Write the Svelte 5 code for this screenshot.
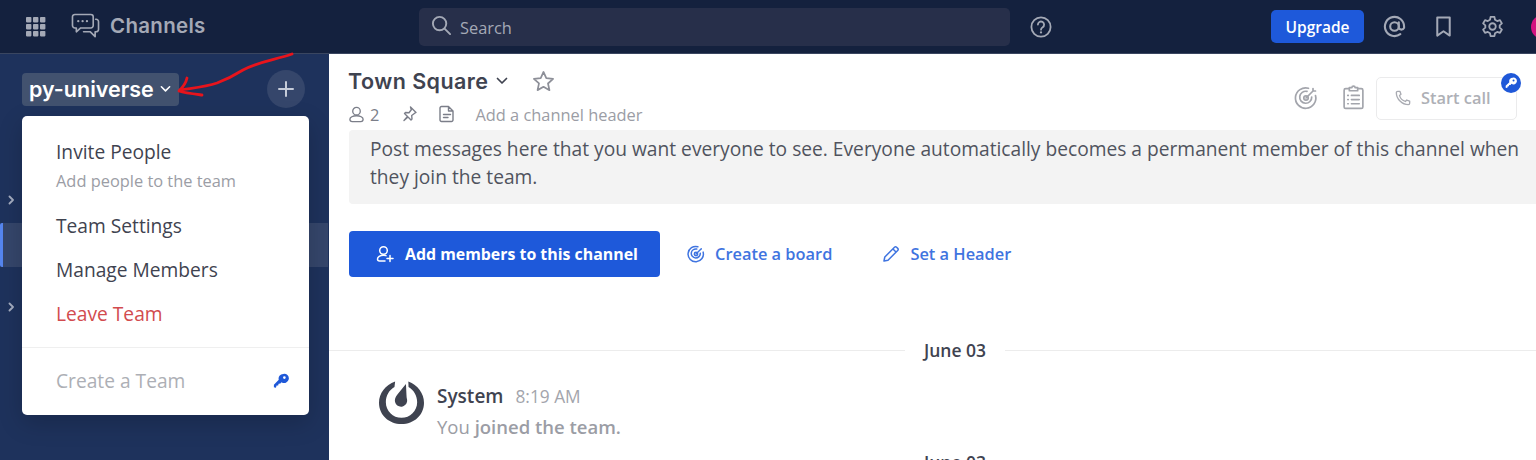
<script>
  const menuItems = [
    { label: 'Team Settings' },
    { label: 'Manage Members' },
    { label: 'Leave Team', danger: true }
  ];
</script>

<div class="app">
  <header class="topbar">
    <div class="product">
      <svg class="grid-icon" viewBox="0 0 20 20" fill="#a4a9b6">
        {#each [0, 7, 14] as y}
          {#each [0, 7, 14] as x}
            <rect x={x} y={y} width="5.4" height="5.4" rx="0.8" />
          {/each}
        {/each}
      </svg>
      <svg class="channels-icon" viewBox="0 0 30 28" fill="none" stroke="#a4a9b6" stroke-width="1.7" stroke-linejoin="round" stroke-linecap="round">
        <path d="M4 1.5h16.5a2.5 2.5 0 0 1 2.5 2.5v9a2.5 2.5 0 0 1-2.5 2.5H10l-4.5 4v-4H4A2.5 2.5 0 0 1 1.500 13V4A2.500 2.500 0 0 1 4 1.500z" />
        <path d="M25.500 6.500h.5a2.500 2.500 0 0 1 2.500 2.500v8a2.500 2.500 0 0 1-2.500 2.500h-1v5l-5-5H13" />
        <path d="M7.500 8.500h.01M12 8.500h.01M16.500 8.500h.01" stroke-width="2.400" />
      </svg>
      <span class="product-name">Channels</span>
    </div>
    <div class="search">
      <svg viewBox="0 0 22 22" fill="none" stroke="#a4a9b6" stroke-width="2" stroke-linecap="round"><circle cx="9" cy="9" r="7" /><path d="M14.200 14.200 20 20" /></svg>
      <span>Search</span>
    </div>
    <svg class="help" viewBox="0 0 22 22" fill="none" stroke="#a4a9b6" stroke-width="1.800" stroke-linecap="round">
      <circle cx="11" cy="11" r="9.600" />
      <path d="M7.900 8.600a3.100 3.100 0 1 1 4.800 2.600c-1.100.7-1.700 1.300-1.700 2.500" />
      <path d="M11 16.300v.1" stroke-width="2.200" />
    </svg>
    <div class="top-right">
      <button class="upgrade">Upgrade</button>
      <svg class="top-icon" viewBox="0 0 24 24" fill="none" stroke="#a4a9b6" stroke-width="2.200" stroke-linecap="round">
        <circle cx="12" cy="12" r="4.500" />
        <path d="M16.500 7.500v6a3 3 0 0 0 5.500 0V12a10 10 0 1 0-4 8" />
      </svg>
      <svg class="top-icon" viewBox="0 0 24 24" fill="none" stroke="#a4a9b6" stroke-width="2.100" stroke-linejoin="round">
        <path d="M5.500 2.500h13v19L12 17l-6.500 4.500z" />
      </svg>
      <svg class="top-icon" viewBox="0 0 24 24" fill="none" stroke="#a4a9b6" stroke-width="1.900" stroke-linejoin="round">
        <circle cx="12" cy="12" r="3.400" />
        <path d="M10 2h4l.6 3 2.300 1.300 2.900-1 2 3.500-2.300 2v2.400l2.300 2-2 3.500-2.900-1-2.300 1.300-.6 3h-4l-.6-3-2.300-1.300-2.900 1-2-3.500 2.300-2v-2.400l-2.300-2 2-3.500 2.900 1L9.400 5z" />
      </svg>
      <span class="avatar"></span>
    </div>
  </header>

  <div class="body">
    <aside class="sidebar">
      <div class="team-row">
        <button class="team-btn">py-universe
          <svg viewBox="0 0 12 8" fill="none" stroke="#fff" stroke-width="1.700" stroke-linecap="round" stroke-linejoin="round"><path d="M1.500 1.500 6 6l4.500-4.500" /></svg>
        </button>
        <button class="add-btn" aria-label="Add">
          <svg viewBox="0 0 16 16" fill="none" stroke="#c5cbd8" stroke-width="2" stroke-linecap="round"><path d="M8 1v14M1 8h14" /></svg>
        </button>
      </div>
      <div class="cat one"><svg viewBox="0 0 6 10" fill="none" stroke="#a4adc0" stroke-width="1.800" stroke-linecap="round" stroke-linejoin="round"><path d="M1.500 1.500 5 5 1.500 8.500" /></svg></div>
      <div class="active-row"></div>
      <div class="cat two"><svg viewBox="0 0 6 10" fill="none" stroke="#a4adc0" stroke-width="1.800" stroke-linecap="round" stroke-linejoin="round"><path d="M1.500 1.500 5 5 1.500 8.500" /></svg></div>

      <div class="menu">
        <div class="item invite">
          <div>Invite People</div>
          <div class="sub">Add people to the team</div>
        </div>
        {#each menuItems as item}
          <div class="item" class:danger={item.danger}>{item.label}</div>
        {/each}
        <hr />
        <div class="item muted">
          <span>Create a Team</span>
          <svg viewBox="0 0 18 18" fill="#1f58d8"><path d="M11.500 1a5.200 5.200 0 0 0-5 6.700L1 13.200V16l2.300.6.700-2.400 1.800-.2.500-1.900 2-.2 1.300-1.600A5.200 5.200 0 1 0 11.500 1zm1.300 2.700a1.500 1.500 0 1 1 0 3 1.500 1.500 0 0 1 0-3z" /></svg>
        </div>
      </div>
    </aside>

    <main class="main">
      <div class="channel-header">
        <div class="channel-info">
          <div class="channel-title">
            <span>Town Square</span>
            <svg class="chev" viewBox="0 0 12 8" fill="none" stroke="#3f4350" stroke-width="1.700" stroke-linecap="round" stroke-linejoin="round"><path d="M1.500 1.500 6 6l4.500-4.500" /></svg>
            <svg class="star" viewBox="0 0 24 24" fill="none" stroke="#8d8f98" stroke-width="1.800" stroke-linejoin="round"><path d="m12 2 2.900 6.500 7.100.8-5.300 4.800 1.500 7L12 17.500 5.800 21l1.500-7L2 9.300l7.100-.8z" /></svg>
          </div>
          <div class="channel-meta">
            <svg class="m-user" viewBox="0 0 18 18" fill="none" stroke="#7b7e89" stroke-width="1.400"><circle cx="9" cy="5.500" r="4" /><path d="M4.500 16.500h9a2.500 2.500 0 0 0 2.500-2.500c0-2-3-3.700-7-3.700S2 12 2 14a2.500 2.500 0 0 0 2.500 2.500z" /></svg>
            <span class="count">2</span>
            <svg class="m-pin" viewBox="0 0 18 18" fill="none" stroke="#7b7e89" stroke-width="1.400" stroke-linejoin="round" stroke-linecap="round"><path d="M10.500 2 16 7.500l-1.300.7-3 2.300.3 3.500-1 1-3-3-4 3.500 3.500-4-3-3 1-1 3.500.3 2.300-3z" /></svg>
            <svg class="m-file" viewBox="0 0 16 18" fill="none" stroke="#7b7e89" stroke-width="1.400" stroke-linejoin="round" stroke-linecap="round"><path d="M2.500 1.500h7l4.500 4.500v9a1.500 1.500 0 0 1-1.500 1.500h-10A1.500 1.500 0 0 1 1 15V3a1.500 1.500 0 0 1 1.500-1.500zM9.500 1.500V6H14M4.500 9.500h7M4.500 12.500h4.500" /></svg>
            <span class="add-header">Add a channel header</span>
          </div>
        </div>
        <div class="header-actions">
          <svg class="h-target" viewBox="0 0 24 24" fill="none" stroke="#a3a5ac" stroke-width="1.700" stroke-linecap="round"><path d="M21.500 9.500A10.200 10.200 0 1 1 14.500 2.300" /><path d="M17.700 11a6 6 0 1 1-4.700-5.600" /><circle cx="12" cy="12" r="2.200" /><path d="m12 12 7-7M19 5V2.500M19 5h2.500" /></svg>
          <svg class="h-list" viewBox="0 0 20 24" fill="none" stroke="#a3a5ac" stroke-width="1.600" stroke-linecap="round" stroke-linejoin="round"><path d="M6 3.500H2.500A1.500 1.500 0 0 0 1 5v16a1.500 1.500 0 0 0 1.500 1.500h15A1.500 1.500 0 0 0 19 21V5a1.500 1.500 0 0 0-1.500-1.500H14" /><path d="M6 2.500h2.500a1.500 1.500 0 0 1 3 0H14v3H6zM4.500 10h.5M8 10h7.500M4.500 14h.5M8 14h7.500M4.500 18h.5M8 18h7.500" /></svg>
          <div class="call">
            <svg viewBox="0 0 18 18" fill="none" stroke="#a9abb2" stroke-width="1.500" stroke-linecap="round" stroke-linejoin="round"><path d="M3 1.500h2.500l1.200 3.300-1.600 1.500a10 10 0 0 0 6.600 6.600l1.500-1.600 3.300 1.200V15a1.500 1.500 0 0 1-1.500 1.500C8 16.500 1.500 10 1.500 3A1.500 1.500 0 0 1 3 1.500z" /></svg>
            <span>Start call</span>
            <span class="key-badge">
              <svg viewBox="0 0 18 18" fill="#fff"><path d="M11.500 1a5.200 5.200 0 0 0-5 6.700L1 13.200V16l2.300.6.700-2.400 1.800-.2.500-1.900 2-.2 1.300-1.600A5.200 5.200 0 1 0 11.500 1zm1.300 2.700a1.500 1.500 0 1 1 0 3 1.500 1.500 0 0 1 0-3z" /></svg>
            </span>
          </div>
        </div>
      </div>

      <div class="notice">Post messages here that you want everyone to see. Everyone automatically becomes a permanent member of this channel when they join the team.</div>

      <div class="actions">
        <button class="primary">
          <svg viewBox="0 0 18 18" fill="none" stroke="#fff" stroke-width="1.500" stroke-linecap="round"><circle cx="7.500" cy="5.500" r="3.800" /><path d="M9 16H3.500A2 2 0 0 1 1.500 14c0-2 2.500-3.800 6-3.800 1 0 1.800.1 2.500.4M14 10.500v6M11 13.500h6" /></svg>
          Add members to this channel
        </button>
        <span class="link board">
          <svg viewBox="0 0 24 24" fill="none" stroke="#3f74e0" stroke-width="2" stroke-linecap="round"><path d="M21.500 9.500A10.200 10.200 0 1 1 14.500 2.300" /><path d="M17.700 11a6 6 0 1 1-4.700-5.600" /><circle cx="12" cy="12" r="2.200" /><path d="m12 12 7-7" /></svg>
          Create a board
        </span>
        <span class="link">
          <svg viewBox="0 0 18 18" fill="none" stroke="#3f74e0" stroke-width="1.500" stroke-linejoin="round"><path d="M2 16l.8-4L12.500 2.300a1.500 1.500 0 0 1 2.100 0l1.100 1.100a1.500 1.500 0 0 1 0 2.100L6 15.200z" /><path d="m11 4 3 3" /></svg>
          Set a Header
        </span>
      </div>

      <div class="date-sep first"><span>June 03</span></div>

      <div class="post">
        <svg class="logo" viewBox="0 0 46 46" fill="#3f4350">
          <path fill-rule="evenodd" d="M16.500 1.500C6.500 5 0 13.600 0 23.200 0 35.800 10.300 45 23 45s23-9.200 23-21.800C46 13.700 39.600 5.200 30 1.500l.2 5.700c5.200 3 8.800 8.800 8.800 15.500 0 8.800-7.200 16-16 16s-16-7.200-16-16c0-6.700 3.500-12.500 8.800-15.500z" />
          <path d="M27.500 4 19 14.500c-2.300 3-3.200 5.500-2.600 8 .9 3.400 4.300 5.500 7.700 4.600 3.400-.9 5.300-4.200 4.500-7.600C28 17 28 10 27.500 4z" />
        </svg>
        <div class="post-body">
          <div class="post-head"><span class="author">System</span><span class="time">8:19 AM</span></div>
          <div class="post-text">You <b>joined the team.</b></div>
        </div>
      </div>

      <div class="date-sep second"><span>June 03</span></div>
    </main>
  </div>

  <svg class="arrow" viewBox="0 0 130 50" fill="none" stroke="#e8141c" stroke-width="2.800" stroke-linecap="round" stroke-linejoin="round">
    <path d="M122 4C105 10 90 11 73 20 65 25 55 30 47 33 35 37 22 38 10 40" />
    <path d="M17 28C16 33 13 37 9 41 15 43 24 44 32 45" />
  </svg>
</div>

<style>
  :global(body) { margin: 0; background: #fff; }
  .app {
    position: relative;
    width: 1536px;
    height: 460px;
    overflow: hidden;
    display: flex;
    flex-direction: column;
    font-family: "Open Sans", sans-serif;
    color: #3f4350;
  }
  button { font-family: inherit; border: 0; cursor: pointer; }

  .topbar {
    height: 54px;
    flex: none;
    background: #14213e;
    border-bottom: 1px solid #3a4660;
    box-sizing: border-box;
    display: flex;
    align-items: center;
    padding-left: 26px;
  }
  .product { display: flex; align-items: center; width: 393px; }
  .grid-icon { width: 20px; height: 20px; }
  .channels-icon { width: 29px; height: 27px; margin-left: 25px; }
  .product-name {
    margin-left: 10px;
    padding-bottom: 3px;
    font-family: Inter, sans-serif;
    font-weight: 600;
    font-size: 20.500px;
    letter-spacing: 0.3px;
    color: #a4a9b6;
  }
  .search {
    width: 591px;
    height: 38px;
    background: #272f4a;
    border-radius: 5px;
    display: flex;
    align-items: center;
    gap: 8px;
    padding-left: 12px;
    box-sizing: border-box;
    color: #a4a9b6;
    font-size: 16.400px;
  }
  .search svg { width: 21px; height: 21px; margin-top: -2px; }
  .search span { padding-top: 1px; }
  .help { width: 22px; height: 22px; margin-left: 20px; }
  .top-right { margin-left: auto; display: flex; align-items: center; }
  .upgrade {
    width: 93px;
    height: 33px;
    background: #1e59da;
    color: #fff;
    font-weight: 600;
    font-size: 15.500px;
    border-radius: 5px;
    padding: 0;
  }
  .top-icon { width: 23px; height: 23px; margin-left: 18px; margin-right: 8px; }
  .top-icon:nth-of-type(1) { margin-left: 19px; }
  .avatar {
    width: 24px;
    height: 24px;
    border-radius: 50%;
    background: #d5127f;
    margin-left: 19px;
    margin-right: -19px;
  }

  .body { flex: 1; display: flex; min-height: 0; }
  .sidebar {
    position: relative;
    width: 329px;
    flex: none;
    background: #1e325c;
    box-sizing: border-box;
  }
  .team-row {
    display: flex;
    align-items: center;
    justify-content: space-between;
    padding: 16px 24px 0 22px;
  }
  .team-btn {
    height: 33px;
    margin-top: 1px;
    background: #42526f;
    color: #fff;
    border-radius: 4px;
    font-family: Inter, sans-serif;
    font-weight: 600;
    font-size: 21.500px;
    padding: 0 8px 2px 7px;
    display: flex;
    align-items: center;
    gap: 6px;
  }
  .team-btn svg { width: 11px; height: 8px; }
  .add-btn {
    width: 38px;
    height: 38px;
    border-radius: 50%;
    background: #35466b;
    padding: 0;
    display: flex;
    align-items: center;
    justify-content: center;
  }
  .add-btn svg { width: 16px; height: 16px; }
  .cat { position: absolute; left: 8px; width: 6px; height: 10px; display: flex; }
  .cat.one { top: 141px; }
  .cat.two { top: 248px; }
  .active-row {
    position: absolute;
    left: 0;
    right: 1px;
    top: 169px;
    height: 44px;
    background: #35466b;
    border-left: 3px solid #5585ee;
    border-radius: 2px 0 0 2px;
  }
  .menu {
    position: absolute;
    left: 22px;
    top: 62px;
    width: 287px;
    height: 299px;
    background: #fff;
    border-radius: 5px;
    box-shadow: 0 8px 24px rgba(0, 0, 0, 0.18);
    box-sizing: border-box;
    padding-top: 14px;
    font-size: 19.200px;
    color: #3f4350;
  }
  .item {
    padding: 0 20px 0 34px;
    height: 44px;
    display: flex;
    align-items: center;
    justify-content: space-between;
  }
  .item.invite {
    display: block;
    height: 73px;
    padding-top: 7px;
    box-sizing: border-box;
    line-height: 30px;
  }
  .sub { font-size: 16.400px; color: #9b9da5; line-height: 28px; }
  .danger { color: #d24b4e; }
  .muted { color: #adafb5; height: 65px; }
  .muted svg { width: 16px; height: 16px; }
  hr { border: 0; border-top: 1px solid #efefef; margin: 12px 0 0; }

  .main { flex: 1; min-width: 0; position: relative; overflow: hidden; background: #fff; }
  .channel-header {
    height: 76px;
    box-sizing: border-box;
    display: flex;
    justify-content: space-between;
    padding: 13px 19px 0 19px;
  }
  .channel-title {
    display: flex;
    align-items: center;
    font-family: Inter, sans-serif;
    font-weight: 600;
    font-size: 21.500px;
    letter-spacing: 0.45px;
    height: 27px;
  }
  .chev { width: 12px; height: 8px; margin-left: 7px; }
  .star { width: 23px; height: 23px; margin: 2px 0 0 24px; }
  .channel-meta {
    display: flex;
    align-items: center;
    margin-top: 9px;
    height: 22px;
    font-size: 16.400px;
    color: #7b7e89;
  }
  .m-user { width: 17px; height: 17px; }
  .count { margin-left: 5px; }
  .m-pin { width: 18px; height: 18px; margin-left: 21px; }
  .m-file { width: 16px; height: 18px; margin-left: 21px; }
  .add-header { margin-left: 20px; color: #9b9da5; }
  .header-actions { display: flex; align-items: flex-start; margin-top: 10px; }
  .h-target { width: 24px; height: 24px; margin-top: 9px; }
  .h-list { width: 21px; height: 25px; margin-top: 8px; margin-left: 25px; }
  .call {
    position: relative;
    width: 141px;
    height: 43px;
    box-sizing: border-box;
    border: 1px solid #ebebec;
    border-radius: 5px;
    margin-left: 12px;
    display: flex;
    align-items: center;
    gap: 10px;
    padding: 0 0 2px 18px;
    font-size: 16.400px;
    font-weight: 600;
    color: #aeb0b6;
  }
  .call > svg { width: 16px; height: 16px; }
  .key-badge {
    position: absolute;
    right: -5px;
    top: -5px;
    width: 20px;
    height: 20px;
    border-radius: 50%;
    background: #1f58d8;
    display: flex;
    align-items: center;
    justify-content: center;
  }
  .key-badge svg { width: 12px; height: 12px; }

  .notice {
    margin-left: 20px;
    height: 74px;
    background: #f3f3f3;
    box-sizing: border-box;
    padding: 5px 8px 0 21px;
    font-size: 19.200px;
    line-height: 28px;
    color: #50535e;
    border-radius: 4px 0 0 4px;
  }
  .actions {
    display: flex;
    align-items: center;
    margin: 27px 0 0 20px;
  }
  .primary {
    width: 311px;
    height: 46px;
    background: #1e59da;
    color: #fff;
    border-radius: 4px;
    font-weight: 700;
    font-size: 15.900px;
    display: flex;
    align-items: center;
    gap: 11px;
    padding: 0 0 0 27px;
  }
  .primary svg { width: 18px; height: 18px; }
  .link {
    display: flex;
    align-items: center;
    gap: 10px;
    color: #3f74e0;
    font-weight: 600;
    font-size: 16.400px;
    margin-left: 50px;
    padding-bottom: 2px;
  }
  .link.board { margin-left: 27px; }
  .link svg { width: 18px; height: 18px; margin-top: 1px; }

  .date-sep {
    display: flex;
    align-items: center;
    font-weight: 600;
    font-size: 17.500px;
    color: #3f4350;
    height: 24px;
  }
  .date-sep span { padding: 0 19px; }
  .date-sep::before { content: ''; width: 576px; flex: none; border-top: 1px solid #ececec; }
  .date-sep::after { content: ''; flex: 1; border-top: 1px solid #ececec; }
  .date-sep.first { margin-top: 61px; }
  .date-sep.second { margin-top: 8px; }

  .post { display: flex; margin: 8px 0 0 50px; }
  .logo { width: 45px; height: 45px; margin-top: 10px; flex: none; }
  .post-body { margin-left: 13px; }
  .post-head { display: flex; align-items: baseline; gap: 12px; height: 32px; line-height: 32px; margin-top: 10px; }
  .author { font-weight: 600; font-size: 19px; }
  .time { font-size: 17.300px; color: #a3a5ac; }
  .post-text { font-size: 18.500px; line-height: 30px; color: #9b9da5; }
  .post-text b { font-weight: 600; }

  .arrow {
    position: absolute;
    left: 170px;
    top: 50px;
    width: 130px;
    height: 50px;
  }
</style>
